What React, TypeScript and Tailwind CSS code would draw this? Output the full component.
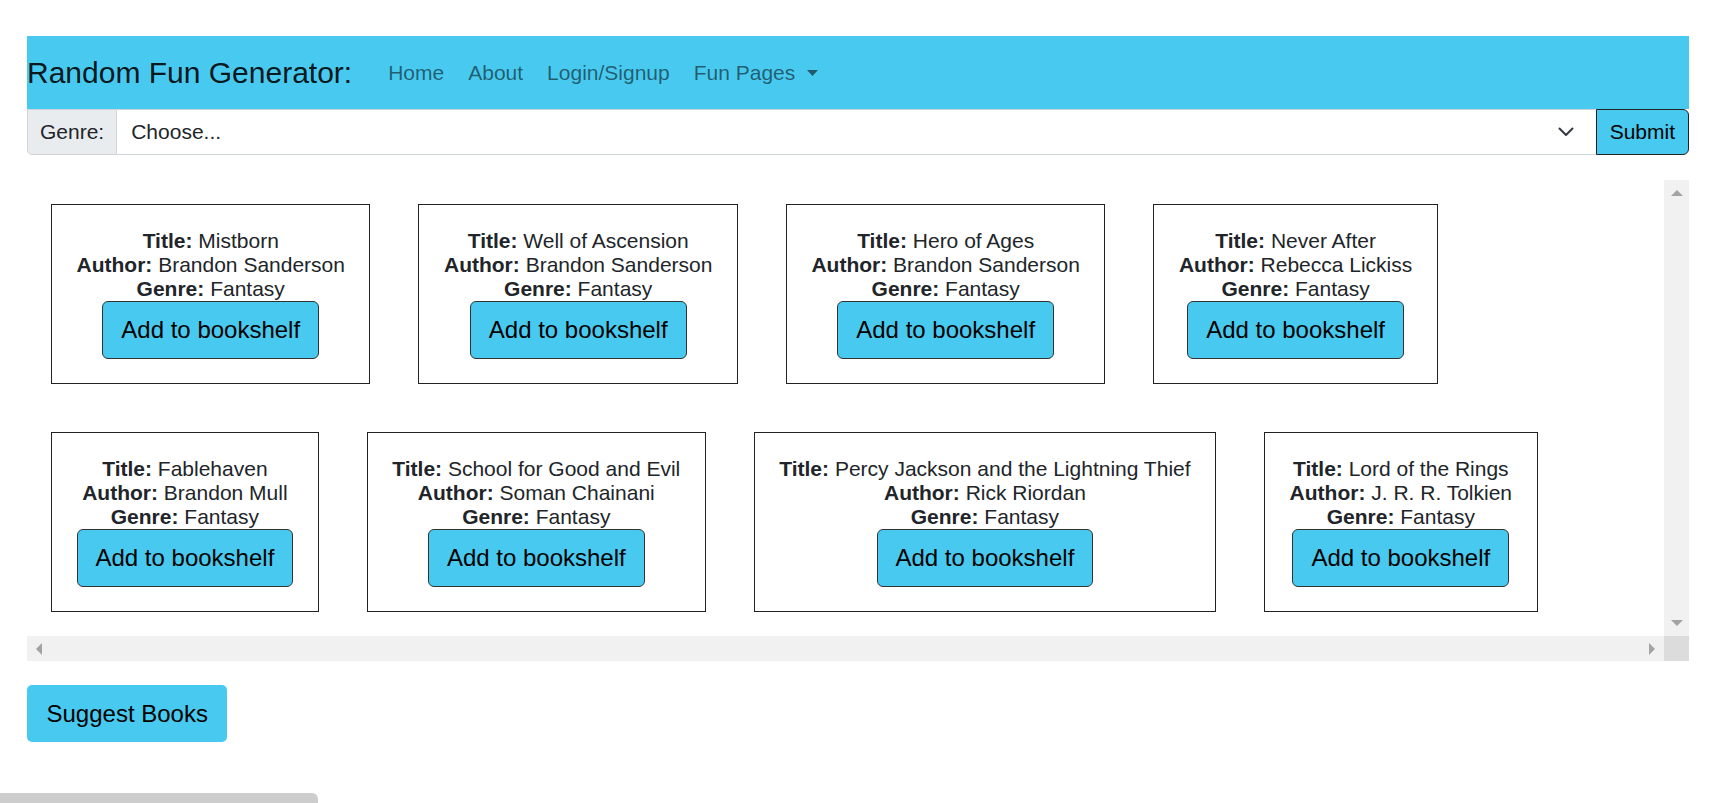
import React from "react";

const BOOKS = [
  { title: "Mistborn", author: "Brandon Sanderson", genre: "Fantasy" },
  { title: "Well of Ascension", author: "Brandon Sanderson", genre: "Fantasy" },
  { title: "Hero of Ages", author: "Brandon Sanderson", genre: "Fantasy" },
  { title: "Never After", author: "Rebecca Lickiss", genre: "Fantasy" },
  { title: "Fablehaven", author: "Brandon Mull", genre: "Fantasy" },
  { title: "School for Good and Evil", author: "Soman Chainani", genre: "Fantasy" },
  { title: "Percy Jackson and the Lightning Thief", author: "Rick Riordan", genre: "Fantasy" },
  { title: "Lord of the Rings", author: "J. R. R. Tolkien", genre: "Fantasy" },
];

const Arrow = ({ dir }: { dir: "up" | "down" | "left" | "right" }) => {
  const pts = {
    up: "0,6 6,0 12,6",
    down: "0,0 12,0 6,6",
    left: "6,0 6,12 0,6",
    right: "0,0 0,12 6,6",
  }[dir];
  const vertical = dir === "up" || dir === "down";
  return (
    <svg width={vertical ? 12 : 6} height={vertical ? 6 : 12} viewBox={vertical ? "0 0 12 6" : "0 0 6 12"}>
      <polygon points={pts} fill="#a3a3a3" />
    </svg>
  );
};

const BookCard = ({ title, author, genre }: { title: string; author: string; genre: string }) => (
  <div className="m-[24px] border border-[#222] px-[24.5px] pt-[24px] pb-[24.5px] text-center text-[21px] leading-[24px] text-[#212529]">
    <div>
      <b>Title:</b> {title}
    </div>
    <div>
      <b>Author:</b> {author}
    </div>
    <div>
      <b>Genre:</b> {genre}
    </div>
    <button className="rounded-[6px] border border-[#333] bg-[#48caf0] px-[18px] py-[14px] text-[24px] leading-[27.5px] text-black">
      Add to bookshelf
    </button>
  </div>
);

export default function App() {
  return (
    <div className="h-[803px] overflow-hidden bg-white font-['Liberation_Sans',Arial,sans-serif]">
      <div className="ml-[27px] w-[1662px] pt-[36px]">
        {/* Navbar */}
        <nav className="flex h-[73px] items-center bg-[#48caf0]">
          <span className="mr-[24px] text-[30px] text-black/90">Random Fun Generator:</span>
          <a className="px-[12px] text-[21px] text-black/55">Home</a>
          <a className="px-[12px] text-[21px] text-black/55">About</a>
          <a className="px-[12px] text-[21px] text-black/55">Login/Signup</a>
          <a className="flex items-center px-[12px] text-[21px] text-black/55">
            Fun Pages
            <svg className="ml-[12px]" width="11" height="6" viewBox="0 0 11 6">
              <polygon points="0,0 11,0 5.5,6" fill="rgba(0,0,0,0.55)" />
            </svg>
          </a>
        </nav>

        {/* Genre selector */}
        <div className="flex h-[46px] text-[21px] text-[#212529]">
          <div className="flex items-center rounded-bl-[5px] border border-[#ced4da] bg-[#e9ecef] px-[12px]">Genre:</div>
          <div className="flex flex-1 items-center justify-between border-y border-[#ced4da] bg-white pl-[14px] pr-[22px]">
            <span>Choose...</span>
            <svg width="16" height="10" viewBox="0 0 16 10">
              <polyline points="1.5,1.5 8,8 14.5,1.5" fill="none" stroke="#343a40" strokeWidth="2" strokeLinecap="round" strokeLinejoin="round" />
            </svg>
          </div>
          <button className="rounded-r-[6px] border border-[#222] bg-[#48caf0] px-[13px] text-[21px] text-black">Submit</button>
        </div>

        {/* Scroll box */}
        <div className="mt-[25px] flex h-[481px] flex-col">
          <div className="flex flex-1">
            <div className="flex flex-1 flex-wrap content-start items-start">
              {BOOKS.map((b) => (
                <BookCard key={b.title} {...b} />
              ))}
            </div>
            <div className="flex w-[25px] flex-col items-center justify-between bg-[#f1f1f1] py-[10px]">
              <Arrow dir="up" />
              <Arrow dir="down" />
            </div>
          </div>
          <div className="flex h-[25px]">
            <div className="flex flex-1 items-center justify-between bg-[#f1f1f1] px-[9px]">
              <Arrow dir="left" />
              <Arrow dir="right" />
            </div>
            <div className="w-[25px] bg-[#dcdcdc]" />
          </div>
        </div>

        <button className="mt-[24px] h-[57px] rounded-[5px] bg-[#48caf0] px-[19.5px] text-[24px] text-black">
          Suggest Books
        </button>
      </div>

      {/* page scrollbar thumb */}
      <div className="mt-[51px] h-[10px] w-[318px] rounded-tr-[6px] bg-[#cdcdcd]" />
    </div>
  );
}
